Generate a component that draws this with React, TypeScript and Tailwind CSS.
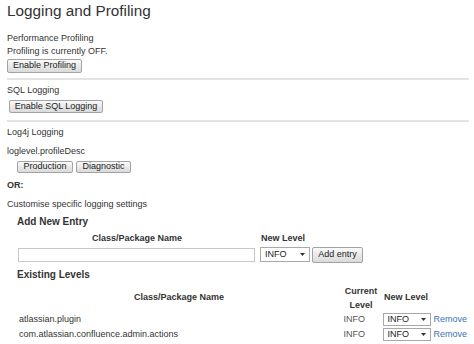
import * as React from 'react';

const btn =
  'flex items-center justify-center border border-[#a3a3a3] rounded-[2px] bg-gradient-to-b from-[#fafafa] to-[#dadada] text-[9px] text-[#222]';

function Button({ label, className }: { label: string; className: string }) {
  return <div className={`${btn} ${className}`}>{label}</div>;
}

function Select({ className = '' }: { className?: string }) {
  return (
    <div className={`flex items-center justify-between border border-[#a9a9a9] bg-white pl-[4px] pr-[4px] text-[9px] text-[#222] ${className}`}>
      <span>INFO</span>
      <svg width="5" height="3" viewBox="0 0 5 3">
        <path d="M0 0 L5 0 L2.5 3 Z" fill="#333" />
      </svg>
    </div>
  );
}

export default function App() {
  const line = 'h-[13px] leading-[13px]';
  const levels = ['atlassian.plugin', 'com.atlassian.confluence.admin.actions'];

  return (
    <div className="w-[474px] h-[344px] overflow-hidden bg-white px-[7px] text-[9px] text-[#333] font-['Liberation_Sans',Arial,sans-serif]">
      <div className="h-[22px] leading-[22px] text-[15.3px]">Logging and Profiling</div>

      <div className={`mt-[10px] ${line}`}>Performance Profiling</div>
      <div className={line}>Profiling is currently OFF.</div>
      <Button label="Enable Profiling" className="mt-[1px] w-[75px] h-[14px]" />
      <div className="mt-[5px] h-[2px] w-[462px] bg-[#e3e3e3]" />

      <div className={`mt-[4px] ${line}`}>SQL Logging</div>
      <Button label="Enable SQL Logging" className="mt-[3px] ml-[2px] w-[94px] h-[13px]" />
      <div className="mt-[7px] h-[2px] w-[462px] bg-[#e3e3e3]" />

      <div className={`mt-[4px] ${line}`}>Log4j Logging</div>
      <div className={`mt-[6px] ${line}`}>loglevel.profileDesc</div>
      <div className="mt-[3px] ml-[10px] flex gap-[3px]">
        <Button label="Production" className="w-[56px] h-[12px]" />
        <Button label="Diagnostic" className="w-[55px] h-[12px]" />
      </div>

      <div className={`mt-[6px] ${line} font-bold`}>OR:</div>
      <div className={`mt-[6px] ${line}`}>Customise specific logging settings</div>

      <div className="ml-[10px]">
        <div className="mt-[4px] h-[14px] leading-[14px] text-[10px] font-bold">Add New Entry</div>
        <div className={`mt-[3px] flex ${line} font-bold`}>
          <div className="w-[240px] text-center">Class/Package Name</div>
          <div className="pl-[4px]">New Level</div>
        </div>
        <div className="mt-[2px] flex h-[15px] items-center">
          <div className="w-[240px] pl-[1px]">
            <div className="h-[14px] w-[237px] border border-[#c8c8c8] bg-white" />
          </div>
          <Select className="ml-[3px] w-[50px] h-[15px]" />
          <Button label="Add entry" className="ml-[2px] w-[51px] h-[16px]" />
        </div>

        <div className="mt-[6px] h-[14px] leading-[14px] text-[10px] font-bold">Existing Levels</div>
        <div className="mt-[2px] flex h-[28px] items-center font-bold">
          <div className="w-[324px] text-center">Class/Package Name</div>
          <div className="w-[40px] text-center leading-[14px]">
            Current
            <br />
            Level
          </div>
          <div className="pl-[3px]">New Level</div>
        </div>
        {levels.map((name) => (
          <div key={name} className="flex h-[15px] items-center">
            <div className="w-[324px] pl-[2px]">{name}</div>
            <div className="w-[40px] pl-[3px] text-[#555]">INFO</div>
            <Select className="ml-[2px] w-[49px] h-[13px]" />
            <a className="ml-[2px] text-[#3b73af]">Remove</a>
          </div>
        ))}
      </div>
    </div>
  );
}
